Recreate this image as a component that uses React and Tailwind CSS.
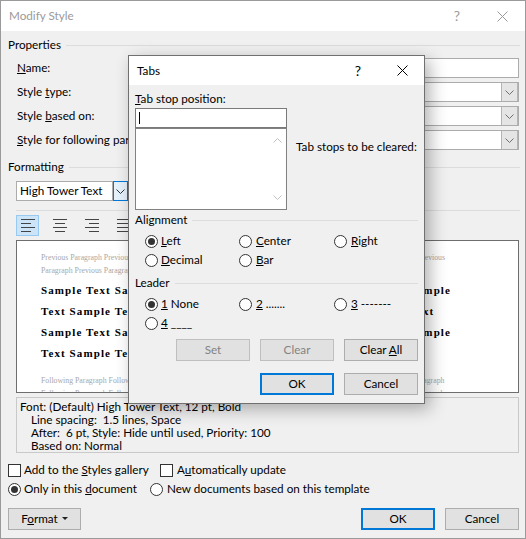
import React from "react";

function Radio({ checked }) {
  return (
    <span className="w-[13px] h-[13px] rounded-full border border-[#333333] bg-white flex items-center justify-center shrink-0">
      {checked && <span className="w-[7px] h-[7px] rounded-full bg-[#333333]" />}
    </span>
  );
}

function Check() {
  return <span className="w-[13px] h-[13px] border border-[#333333] bg-white shrink-0" />;
}

function Chevron({ className = "" }) {
  return (
    <svg width="9" height="5" viewBox="0 0 9 5" className={className}>
      <path d="M0.5 0.5 L4.5 4.5 L8.5 0.5" fill="none" stroke="currentColor" strokeWidth="1" />
    </svg>
  );
}

function CloseX({ className = "" }) {
  return (
    <svg width="11" height="11" viewBox="0 0 11 11" className={className}>
      <path d="M0.5 0.5 L10.5 10.5 M10.5 0.5 L0.5 10.5" fill="none" stroke="currentColor" strokeWidth="1" />
    </svg>
  );
}

function AlignIcon({ type }) {
  const ys = [2.5, 6.5, 10.5, 14.5];
  const lines = ys.map((y, i) => {
    const full = i % 2 === 0 || type === "justify";
    let x1 = 0;
    let x2 = 14;
    if (!full) {
      if (type === "left") { x1 = 0; x2 = 10; }
      if (type === "center") { x1 = 2; x2 = 12; }
      if (type === "right") { x1 = 4; x2 = 14; }
    }
    return <line key={i} x1={x1} y1={y} x2={x2} y2={y} stroke="#444444" strokeWidth="1" />;
  });
  return (
    <svg width="14" height="17" viewBox="0 0 14 17">
      {lines}
    </svg>
  );
}

function Btn({ children, w = "w-[74px]", primary = false, disabled = false }) {
  return (
    <div
      className={`${w} h-[22px] flex items-center justify-center bg-[#e1e1e1] ${
        primary ? "border-2 border-[#0078d7]" : disabled ? "border border-[#bfbfbf] text-[#838383]" : "border border-[#adadad]"
      }`}
    >
      {children}
    </div>
  );
}

function Dropdown() {
  return (
    <div className="flex-1 h-full border border-[#acacac] bg-white flex justify-end">
      <div className="w-[17px] h-full bg-[#e5e5e5] border-l border-r border-[#b4b4b4] flex items-center justify-center text-[#707070]">
        <Chevron />
      </div>
    </div>
  );
}

function GroupLabel({ children, mt, lineMl = "ml-[5px]" }) {
  return (
    <div className={`${mt} h-[14px] flex items-center`}>
      <span>{children}</span>
      <div className={`flex-1 h-px bg-[#dcdcdc] ${lineMl}`} />
    </div>
  );
}

function TabsDialog() {
  return (
    <div className="absolute left-[127px] top-[54px] w-[297px] h-[349px] border border-[#707070] bg-[#f0f0f0] shadow-[5px_5px_16px_rgba(0,0,0,0.3)] flex flex-col">
      <div className="h-[29px] bg-white flex items-center pl-[8px] shrink-0">
        <span>Tabs</span>
        <span className="ml-auto text-[14px]">?</span>
        <CloseX className="ml-[36px] mr-[16px] text-black" />
      </div>
      <div className="pl-[6px] pr-[6px]">
        <div className="mt-[7px] h-[14px] flex items-center">
          <span><u>T</u>ab stop position:</span>
        </div>
        <div className="mt-[2px] flex">
          <div className="w-[152px] shrink-0">
            <div className="h-[20px] border border-[#7a7a7a] bg-white flex items-center pl-[3px]">
              <span className="w-px h-[12px] bg-black" />
            </div>
            <div className="h-[82px] border border-[#828282] bg-white flex justify-end">
              <div className="w-[17px] h-full flex flex-col items-center justify-between py-[9px] text-[#c2c2c2]">
                <Chevron className="rotate-180" />
                <Chevron />
              </div>
            </div>
          </div>
          <div className="ml-[9px] mt-[32px] h-[14px] flex items-center whitespace-nowrap">
            <span>Tab stops to be cleared:</span>
          </div>
        </div>

        <GroupLabel mt="mt-[3px]">Alignment</GroupLabel>
        <div className="mt-[7px] h-[14px] flex items-center pl-[10px]">
          <div className="w-[94px] flex items-center gap-[3px]"><Radio checked /><span><u>L</u>eft</span></div>
          <div className="w-[95px] flex items-center gap-[4px]"><Radio /><span><u>C</u>enter</span></div>
          <div className="flex items-center gap-[4px]"><Radio /><span><u>R</u>ight</span></div>
        </div>
        <div className="mt-[5px] h-[14px] flex items-center pl-[10px]">
          <div className="w-[94px] flex items-center gap-[3px]"><Radio /><span><u>D</u>ecimal</span></div>
          <div className="w-[95px] flex items-center gap-[4px]"><Radio /><span><u>B</u>ar</span></div>
        </div>

        <GroupLabel mt="mt-[9px]">Leader</GroupLabel>
        <div className="mt-[7px] h-[14px] flex items-center pl-[10px]">
          <div className="w-[94px] flex items-center gap-[3px]"><Radio checked /><span><u>1</u> None</span></div>
          <div className="w-[95px] flex items-center gap-[4px]"><Radio /><span><u>2</u> .......</span></div>
          <div className="flex items-center gap-[4px]"><Radio /><span><u>3</u> -------</span></div>
        </div>
        <div className="mt-[5px] h-[14px] flex items-center pl-[10px]">
          <div className="w-[94px] flex items-center gap-[3px]"><Radio /><span><u>4</u> ____</span></div>
        </div>

        <div className="mt-[9px] flex justify-end gap-[10px]">
          <Btn disabled>Set</Btn>
          <Btn disabled>Clear</Btn>
          <Btn><span>Clear <u>A</u>ll</span></Btn>
        </div>
        <div className="mt-[12px] flex justify-end gap-[10px]">
          <Btn primary>OK</Btn>
          <Btn>Cancel</Btn>
        </div>
      </div>
    </div>
  );
}

function Preview() {
  const gray = "whitespace-nowrap h-[13px] leading-[13px]";
  const bold = "whitespace-nowrap h-[21px] leading-[21px]";
  return (
    <div className="mt-[4px] h-[153px] ml-[15px] mr-[6px] border border-[#6e6e6e] bg-white overflow-hidden pl-[24px] pt-[10px] font-['Liberation_Serif',serif]">
      <div className="text-[7.8px] text-[#a8a8a8]">
        <div className={gray}>Previous Paragraph Previous Paragraph Previous Paragraph Previous Paragraph Previous Paragraph Previous Paragraph Previous</div>
        <div className={gray}>Paragraph Previous Paragraph Previous Paragraph Previous Paragraph Previous Paragraph Previous Paragraph</div>
      </div>
      <div className="mt-[3px] text-[11px] font-bold tracking-[1.1px] text-black">
        <div className={bold}>Sample Text Sample Text Sample Text Sample Text Sample Text Sample</div>
        <div className={bold}>Text Sample Text Sample Text Sample Text Sample Text Sample Text</div>
        <div className={bold}>Sample Text Sample Text Sample Text Sample Text Sample Text Sample</div>
        <div className={bold}>Text Sample Text Sample Text</div>
      </div>
      <div className="mt-[10px] text-[7.8px] text-[#a8a8a8]">
        <div className={gray}>Following Paragraph Following Paragraph Following Paragraph Following Paragraph Following Paragraph Following Paragraph</div>
        <div className={gray}>Following Paragraph Following Paragraph Following Paragraph Following Paragraph Following Paragraph Following Paragraph</div>
      </div>
    </div>
  );
}

export default function App() {
  return (
    <div className="w-[526px] h-[539px] bg-[#f0f0f0] font-['Lato',sans-serif] text-[11.7px] leading-none text-black">
      <div className="relative w-[526px] h-[539px] border border-[#9a9a9a] bg-[#f0f0f0] overflow-hidden">
        <div className="h-[30px] bg-white flex items-center pl-[8px] text-[#9a9a9a]">
          <span>Modify Style</span>
          <span className="ml-auto text-[14px]">?</span>
          <CloseX className="ml-[37px] mr-[17px] text-[#9a9a9a]" />
        </div>

        <div className="pl-[7px] pr-[5px]">
          <GroupLabel mt="mt-[7px]">Properties</GroupLabel>
        </div>
        <div className="pl-[16px] pr-[6px]">
          <div className="mt-[6px] h-[20px] flex items-center">
            <span className="w-[184px] shrink-0 whitespace-nowrap"><u>N</u>ame:</span>
            <div className="flex-1 h-full border border-[#acacac] bg-white" />
          </div>
          <div className="mt-[4px] h-[20px] flex items-center">
            <span className="w-[184px] shrink-0 whitespace-nowrap">Style <u>t</u>ype:</span>
            <Dropdown />
          </div>
          <div className="mt-[4px] h-[20px] flex items-center">
            <span className="w-[184px] shrink-0 whitespace-nowrap">Style <u>b</u>ased on:</span>
            <Dropdown />
          </div>
          <div className="mt-[4px] h-[20px] flex items-center">
            <span className="w-[184px] shrink-0 whitespace-nowrap"><u>S</u>tyle for following paragraph:</span>
            <Dropdown />
          </div>
        </div>

        <div className="pl-[7px] pr-[5px]">
          <GroupLabel mt="mt-[10px]">Formatting</GroupLabel>
        </div>
        <div className="mt-[7px] h-[20px] flex pl-[15px]">
          <div className="w-[97px] h-full border border-[#acacac] bg-white flex items-center pl-[3px] whitespace-nowrap">High Tower Text</div>
          <div className="w-[15px] h-full border border-[#0078d7] bg-[#e5f1fb] flex items-center justify-center text-[#333333]">
            <Chevron />
          </div>
        </div>
        <div className="mt-[9px] h-px bg-[#dcdcdc] ml-[15px] mr-[5px]" />
        <div className="mt-[4px] h-[21px] flex pl-[15px] gap-[9px]">
          <div className="w-[23px] h-full bg-[#cce4f7] border border-[#99c9ef] flex items-center justify-center"><AlignIcon type="left" /></div>
          <div className="w-[23px] h-full flex items-center justify-center"><AlignIcon type="center" /></div>
          <div className="w-[23px] h-full flex items-center justify-center"><AlignIcon type="right" /></div>
          <div className="w-[23px] h-full flex items-center justify-center"><AlignIcon type="justify" /></div>
        </div>

        <Preview />

        <div className="mt-[4px] h-[56px] ml-[15px] mr-[6px] border border-[#c9c9c9] pl-[3px] pt-[2px] leading-[13px] whitespace-pre">
          <div>Font: (Default) High Tower Text, 12 pt, Bold</div>
          <div className="pl-[11px]">Line spacing:  1.5 lines, Space</div>
          <div className="pl-[11px]">After:  6 pt, Style: Hide until used, Priority: 100</div>
          <div className="pl-[11px]">Based on: Normal</div>
        </div>

        <div className="mt-[10px] h-[14px] flex items-center pl-[7px]">
          <div className="w-[152px] flex items-center gap-[3px]"><Check /><span>Add to the <u>S</u>tyles gallery</span></div>
          <div className="flex items-center gap-[4px]"><Check /><span>A<u>u</u>tomatically update</span></div>
        </div>
        <div className="mt-[5px] h-[14px] flex items-center pl-[7px]">
          <div className="w-[142px] flex items-center gap-[3px]"><Radio checked /><span>Only in this <u>d</u>ocument</span></div>
          <div className="flex items-center gap-[4px]"><Radio /><span>New documents based on this template</span></div>
        </div>

        <div className="mt-[12px] h-[22px] flex items-center pl-[7px] pr-[6px]">
          <Btn w="w-[73px]">
            <span className="flex items-center gap-[4px]">
              <span>F<u>o</u>rmat</span>
              <svg width="6" height="3" viewBox="0 0 6 3"><path d="M0 0 L6 0 L3 3 Z" fill="#222222" /></svg>
            </span>
          </Btn>
          <div className="ml-auto flex gap-[10px]">
            <Btn primary>OK</Btn>
            <Btn>Cancel</Btn>
          </div>
        </div>

        <TabsDialog />
      </div>
    </div>
  );
}
